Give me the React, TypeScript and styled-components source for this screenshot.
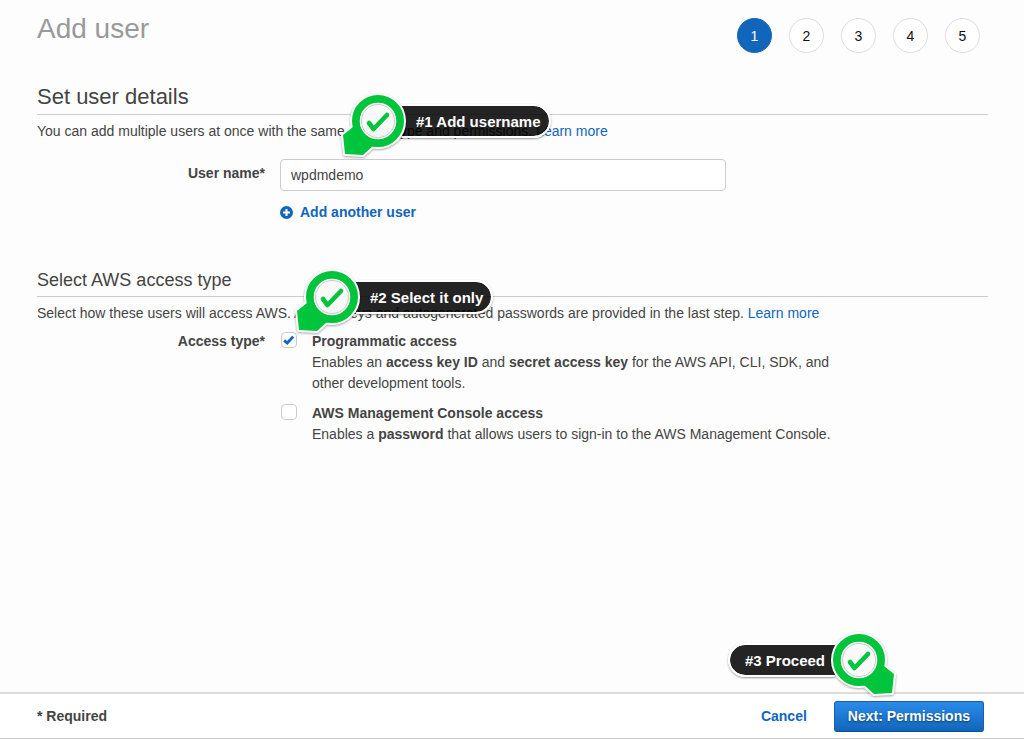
import React, { useState } from "react";
import styled, { createGlobalStyle } from "styled-components";

const GlobalStyle = createGlobalStyle`
  *, *::before, *::after { box-sizing: border-box; }
  body {
    margin: 0;
    background: #fdfdfd;
    color: #444;
    font-family: "Liberation Sans", Arial, sans-serif;
    font-size: 14px;
    line-height: 21px;
  }
`;

const Page = styled.div`
  display: flex;
  flex-direction: column;
  min-height: 100vh;
`;

const Main = styled.main`
  flex: 1;
  padding: 12px 36px 0 37px;
`;

const TopBar = styled.header`
  display: flex;
  justify-content: space-between;
  align-items: flex-start;
`;

const Title = styled.h1`
  margin: 0;
  color: #999;
  font-size: 28px;
  font-weight: 400;
  line-height: 34px;
`;

const Steps = styled.ol`
  display: flex;
  gap: 17px;
  margin: 0;
  padding: 6px 8px 0 0;
  list-style: none;
`;

const Step = styled.li<{ $active?: boolean }>`
  display: flex;
  align-items: center;
  justify-content: center;
  width: 35px;
  height: 35px;
  padding-top: 2px;
  border: 1px solid ${(p) => (p.$active ? "#1166bb" : "#ddd")};
  border-radius: 50%;
  background: ${(p) => (p.$active ? "#1166bb" : "#fff")};
  color: ${(p) => (p.$active ? "#fff" : "#111")};
`;

const Section = styled.section<{ $gap: number }>`
  margin-top: ${(p) => p.$gap}px;
`;

const Heading = styled.h2<{ $minor?: boolean }>`
  margin: 0 0 6px;
  padding-bottom: ${(p) => (p.$minor ? 2 : 4)}px;
  border-bottom: 1px solid #ccc;
  font-size: ${(p) => (p.$minor ? 18 : 22)}px;
  font-weight: 400;
  line-height: 27px;
`;

const Intro = styled.p`
  margin: 0;
`;

const Link = styled.a`
  color: #1166bb;
  text-decoration: none;
`;

const FormRow = styled.div<{ $gap: number }>`
  display: grid;
  grid-template-columns: 228px minmax(0, 1fr);
  column-gap: 15px;
  margin-top: ${(p) => p.$gap}px;
`;

const FieldLabel = styled.label`
  padding-top: 4px;
  font-weight: 700;
  text-align: right;
`;

const GroupLabel = styled.div`
  font-weight: 700;
  text-align: right;
`;

const Field = styled.div`
  position: relative;
  max-width: 446px;
`;

const TextInput = styled.input`
  display: block;
  width: 100%;
  height: 32px;
  padding: 0 10px;
  border: 1px solid #ccc;
  border-radius: 4px;
  background: #fff;
  color: #444;
  font: inherit;
`;

const AddButton = styled.button`
  display: flex;
  align-items: center;
  gap: 7px;
  margin-top: 11px;
  padding: 0;
  border: 0;
  background: none;
  color: #1166bb;
  font: inherit;
  font-weight: 700;
  cursor: pointer;
`;

const Options = styled.div`
  display: flex;
  flex-direction: column;
  gap: 9px;
  max-width: 570px;
`;

const Option = styled.div`
  display: flex;
  gap: 15px;
  padding-left: 1px;
`;

const OptionText = styled.label`
  flex: 1;
`;

const OptionName = styled.strong`
  display: block;
`;

const BoxWrap = styled.span`
  position: relative;
  flex: none;
  width: 16px;
  height: 16px;
  margin-top: 1px;
`;

const Box = styled.input`
  display: block;
  appearance: none;
  width: 16px;
  height: 16px;
  margin: 0;
  border: 1px solid #ccc;
  border-radius: 4px;
  background: #fff;
`;

const Tick = styled.svg`
  position: absolute;
  inset: 0;
  pointer-events: none;
`;

const Footer = styled.footer`
  display: flex;
  align-items: center;
  justify-content: space-between;
  height: 47px;
  padding: 0 40px 0 37px;
  border-top: 2px solid #ddd;
  border-bottom: 1px solid #ccc;
  background: #fff;
  font-weight: 700;
`;

const Actions = styled.div`
  display: flex;
  align-items: center;
  gap: 27px;
`;

const CancelButton = styled.button`
  padding: 0;
  border: 0;
  background: none;
  color: #1166bb;
  font: inherit;
  cursor: pointer;
`;

const ButtonAnchor = styled.div`
  position: relative;
`;

const PrimaryButton = styled.button`
  display: block;
  height: 31px;
  padding: 0 13px;
  border: 1px solid #1560a8;
  border-bottom-color: #0f4d8a;
  border-radius: 3px;
  background: linear-gradient(#2a8bea, #1166bb);
  color: #fff;
  font: inherit;
  text-shadow: 0 1px 2px rgba(0, 0, 0, 0.5);
  cursor: pointer;
`;

type Side = "left" | "right";

const CalloutBox = styled.div<{ $side: Side; $x: number; $y: number }>`
  position: absolute;
  z-index: 2;
  top: ${(p) => p.$y}px;
  ${(p) => p.$side}: ${(p) => p.$x}px;
  display: flex;
  flex-direction: ${(p) => (p.$side === "left" ? "row" : "row-reverse")};
  align-items: center;
  pointer-events: none;
  white-space: nowrap;
`;

const Pin = styled.svg`
  position: relative;
  z-index: 1;
  flex: none;
  overflow: visible;
  filter: drop-shadow(0 1px 1px rgba(0, 0, 0, 0.35));
`;

const Pill = styled.span<{ $side: Side }>`
  height: 34px;
  border: 2px solid #fff;
  background: rgba(0, 0, 0, 0.86);
  background-clip: padding-box;
  box-shadow: 0 1px 2px rgba(0, 0, 0, 0.4);
  color: #fff;
  font-size: 15px;
  font-weight: 700;
  line-height: 31px;
  ${(p) =>
    p.$side === "left"
      ? "margin-left: -14px; padding: 0 8px 0 14px; border-left: 0; border-radius: 0 17px 17px 0;"
      : "margin-right: -14px; padding: 0 10px 0 15px; border-right: 0; border-radius: 17px 0 0 17px;"}
`;

function Callout({ side, x, y, children }: { side: Side; x: number; y: number; children: React.ReactNode }) {
  const tail = "M-25 6 L-35 14 L-33 33 L-15 34 L-5 25 L-14 14 Z";
  return (
    <CalloutBox $side={side} $x={x} $y={y}>
      <Pin width="76" height="76" viewBox="-38 -38 76 76" aria-hidden="true">
        <g transform={side === "right" ? "scale(-1 1)" : undefined}>
          <path d={tail} fill="#fff" stroke="#fff" strokeWidth="4" strokeLinejoin="round" />
          <circle r="23" fill="none" stroke="#fff" strokeWidth="10" />
          <path d={tail} fill="#00c43c" />
          <circle r="22" fill="none" stroke="#00c43c" strokeWidth="8" />
        </g>
        <circle r="18.3" fill="#fff" fillOpacity="0.92" />
        <circle r="16.5" fill="none" stroke="#ccc" strokeWidth="1" />
        <path d="M-9 2 L-4.5 8 L9 -6" fill="none" stroke="#00c43c" strokeWidth="4.6" strokeLinecap="round" strokeLinejoin="round" />
      </Pin>
      <Pill $side={side}>{children}</Pill>
    </CalloutBox>
  );
}

function Checkbox({ id, initial, children }: { id: string; initial: boolean; children?: React.ReactNode }) {
  const [checked, setChecked] = useState(initial);
  return (
    <BoxWrap>
      <Box id={id} type="checkbox" checked={checked} onChange={(e) => setChecked(e.target.checked)} />
      {checked && (
        <Tick width="16" height="16" viewBox="0 0 16 16" aria-hidden="true">
          <path d="M3.2 8.4 L6.2 11 L12.2 4.6" fill="none" stroke="#1166bb" strokeWidth="2.8" />
        </Tick>
      )}
      {children}
    </BoxWrap>
  );
}

export default function App() {
  const [name, setName] = useState("wpdmdemo");
  return (
    <>
      <GlobalStyle />
      <Page>
        <Main>
          <TopBar>
            <Title>Add user</Title>
            <Steps>
              {[1, 2, 3, 4, 5].map((n) => (
                <Step key={n} $active={n === 1} aria-current={n === 1 ? "step" : undefined}>
                  {n}
                </Step>
              ))}
            </Steps>
          </TopBar>

          <Section $gap={30}>
            <Heading>Set user details</Heading>
            <Intro>
              You can add multiple users at once with the same access type and permissions.{" "}
              <Link href="#users">Learn more</Link>
            </Intro>
            <FormRow $gap={17}>
              <FieldLabel htmlFor="username">User name*</FieldLabel>
              <Field>
                <TextInput id="username" type="text" value={name} onChange={(e) => setName(e.target.value)} />
                <AddButton type="button">
                  <svg width="13" height="13" viewBox="0 0 13 13" aria-hidden="true">
                    <circle cx="6.5" cy="6.5" r="6.5" fill="#1166bb" />
                    <path d="M6.5 3v7M3 6.5h7" stroke="#fff" strokeWidth="2" />
                  </svg>
                  Add another user
                </AddButton>
                <Callout side="left" x={60} y={-76}>
                  #1 Add username
                </Callout>
              </Field>
            </FormRow>
          </Section>

          <Section $gap={44}>
            <Heading $minor>Select AWS access type</Heading>
            <Intro>
              Select how these users will access AWS. Access keys and autogenerated passwords are provided in the last
              step. <Link href="#access">Learn more</Link>
            </Intro>
            <FormRow $gap={7} role="group" aria-labelledby="access-type">
              <GroupLabel id="access-type">Access type*</GroupLabel>
              <Options>
                <Option>
                  <Checkbox id="programmatic" initial>
                    <Callout side="left" x={13} y={-73}>
                      #2 Select it only
                    </Callout>
                  </Checkbox>
                  <OptionText htmlFor="programmatic">
                    <OptionName>Programmatic access</OptionName>
                    Enables an <b>access key ID</b> and <b>secret access key</b> for the AWS API, CLI, SDK, and other
                    development tools.
                  </OptionText>
                </Option>
                <Option>
                  <Checkbox id="console" initial={false} />
                  <OptionText htmlFor="console">
                    <OptionName>AWS Management Console access</OptionName>
                    Enables a <b>password</b> that allows users to sign-in to the AWS Management Console.
                  </OptionText>
                </Option>
              </Options>
            </FormRow>
          </Section>
        </Main>

        <Footer>
          <span>* Required</span>
          <Actions>
            <CancelButton type="button">Cancel</CancelButton>
            <ButtonAnchor>
              <PrimaryButton type="button">Next: Permissions</PrimaryButton>
              <Callout side="right" x={87} y={-79}>
                #3 Proceed
              </Callout>
            </ButtonAnchor>
          </Actions>
        </Footer>
      </Page>
    </>
  );
}
